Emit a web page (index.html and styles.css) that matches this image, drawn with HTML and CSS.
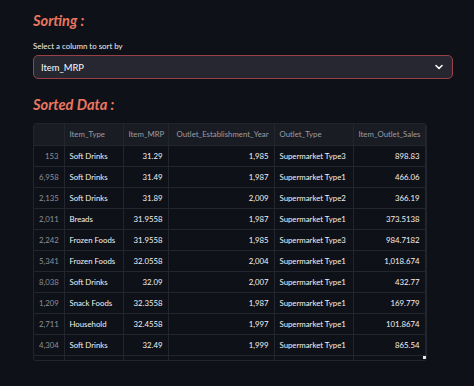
FILE: index.html
```html
<!doctype html>
<html lang="en">

<head>
    <meta charset="utf-8">
    <meta name="viewport" content="width=device-width, initial-scale=1">
    <title>Sorting</title>
    <link rel="stylesheet" href="styles.css">
</head>

<body>
    <div class="main">
        <h3 class="title">Sorting :</h3>

        <label class="field-label" for="sortcol">Select a column to sort by</label>
        <div class="select" id="sortcol">
            <span>Item_MRP</span>
            <svg class="chevron" width="8" height="6" viewBox="0 0 8 6">
                <path d="M1 1.5 L4 4.5 L7 1.5" fill="none" stroke="#fafafa" stroke-width="1.6" stroke-linecap="round" stroke-linejoin="round"/>
            </svg>
        </div>

        <h3 class="title title-2">Sorted Data :</h3>

        <div class="frame">
            <table class="grid">
                <colgroup>
                    <col style="width:30px">
                    <col style="width:59px">
                    <col style="width:45px">
                    <col style="width:106px">
                    <col style="width:79px">
                    <col style="width:72px">
                </colgroup>
                <thead>
                    <tr>
                        <th></th>
                        <th class="left">Item_Type</th>
                        <th>Item_MRP</th>
                        <th>Outlet_Establishment_Year</th>
                        <th class="left">Outlet_Type</th>
                        <th>Item_Outlet_Sales</th>
                    </tr>
                </thead>
                <tbody id="rows"></tbody>
            </table>
            <span class="resize"></span>
        </div>
    </div>

    <script>
        var data = [
            ["153", "Soft Drinks", "31.29", "1,985", "Supermarket Type3", "898.83"],
            ["6,958", "Soft Drinks", "31.49", "1,987", "Supermarket Type1", "466.06"],
            ["2,135", "Soft Drinks", "31.89", "2,009", "Supermarket Type2", "366.19"],
            ["2,011", "Breads", "31.9558", "1,987", "Supermarket Type1", "373.5138"],
            ["2,242", "Frozen Foods", "31.9558", "1,985", "Supermarket Type3", "984.7182"],
            ["5,341", "Frozen Foods", "32.0558", "2,004", "Supermarket Type1", "1,018.674"],
            ["8,038", "Soft Drinks", "32.09", "2,007", "Supermarket Type1", "432.77"],
            ["1,209", "Snack Foods", "32.3558", "1,987", "Supermarket Type1", "169.779"],
            ["2,711", "Household", "32.4558", "1,997", "Supermarket Type1", "101.8674"],
            ["4,304", "Soft Drinks", "32.49", "1,999", "Supermarket Type1", "865.54"],
            ["", "", "", "", "", ""]
        ];
        var str = "";
        data.forEach(function (r) {
            str += `<tr>
                <td class="idx">${r[0]}</td>
                <td class="left">${r[1]}</td>
                <td>${r[2]}</td>
                <td>${r[3]}</td>
                <td class="left">${r[4]}</td>
                <td>${r[5]}</td>
            </tr>`;
        });
        document.getElementById("rows").innerHTML = str;
    </script>
</body>

</html>
```

FILE: styles.css
```css
html, body {
    margin: 0;
    background: #0e1117;
    color: #fafafa;
    font-family: Lato, "Noto Sans", sans-serif;
}

.main {
    width: 420px;
    padding: 10px 0 0 33px;
}

.title {
    margin: 0;
    font-size: 14.6px;
    line-height: 22px;
    font-style: italic;
    font-weight: 700;
    color: #ec7760;
}

.title-2 {
    margin-top: 15px;
}

.field-label {
    display: block;
    margin-top: 8px;
    font-size: 7.9px;
    line-height: 12px;
    color: #f0f0f2;
}

.select {
    margin-top: 3px;
    height: 24px;
    box-sizing: border-box;
    border: 1px solid #9a4147;
    border-radius: 5px;
    background: #262730;
    display: flex;
    align-items: center;
    justify-content: space-between;
    padding: 0 9px 0 7px;
    font-size: 9.4px;
}

.chevron {
    display: block;
}

.frame {
    position: relative;
    margin-top: 7px;
    width: 394px;
    height: 238px;
    box-sizing: border-box;
    border: 1px solid #22252d;
    border-radius: 3px;
    overflow: hidden;
}

.grid {
    table-layout: fixed;
    width: 391px;
    border-collapse: collapse;
    font-size: 7.8px;
}

.grid th,
.grid td {
    height: 21px;
    padding: 0 5px;
    box-sizing: border-box;
    border-right: 1px solid #23262e;
    border-bottom: 1px solid #23262e;
    text-align: right;
    white-space: nowrap;
    overflow: hidden;
}

.grid th {
    background: #1a1c23;
    color: #9a9da6;
    font-weight: 400;
}

.grid .left {
    text-align: left;
}

.grid td.idx {
    color: #8d9099;
}

.grid td {
    color: #f2f2f4;
}

.resize {
    position: absolute;
    right: 0;
    bottom: 1px;
    width: 3px;
    height: 3px;
    background: #e8e8e8;
}
```
